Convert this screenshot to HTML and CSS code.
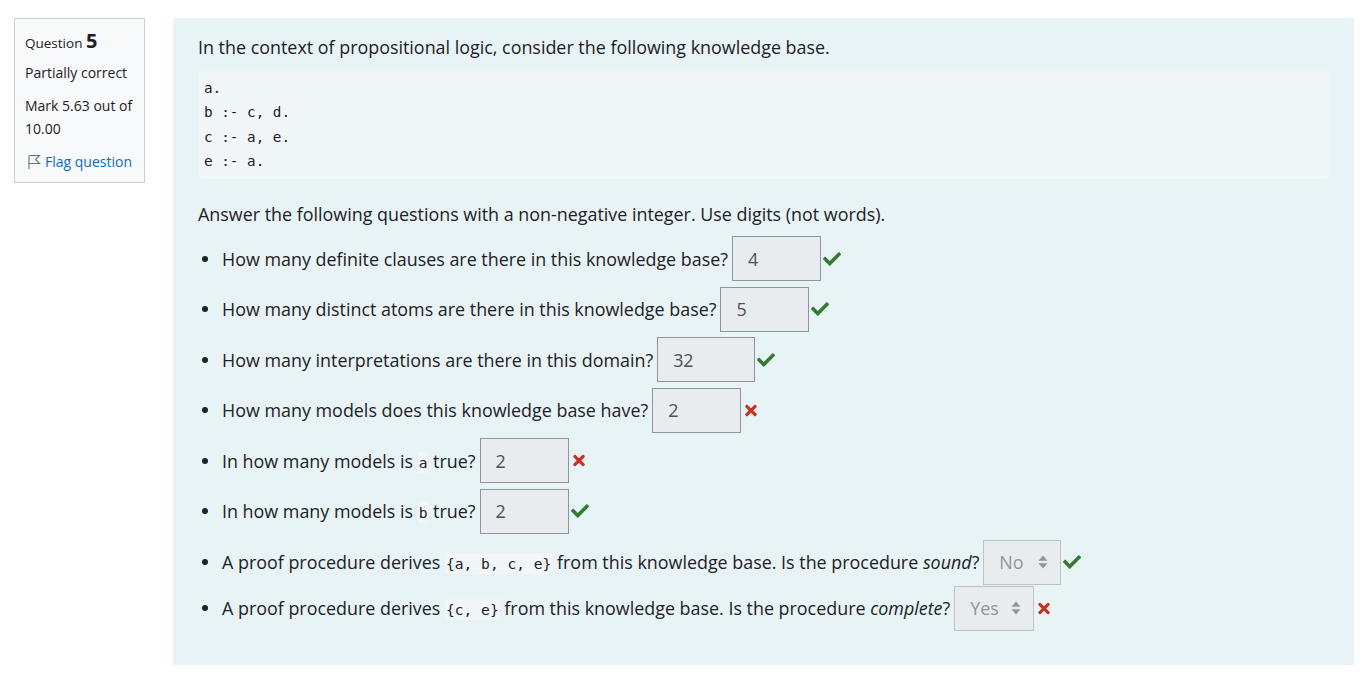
FILE: index.html
```html
<!DOCTYPE html>
<html lang="en">
<head>
<meta charset="utf-8">
<title>Question 5</title>
<link rel="stylesheet" href="styles.css">
</head>
<body>
<div class="que">
  <div class="info">
    <h3 class="qno">Question <span class="num">5</span></h3>
    <div class="state">Partially correct</div>
    <div class="grade">Mark 5.63 out of<br>10.00</div>
    <a class="flag" href="#">
      <svg class="flag-icon" viewBox="0 0 14 16" width="14" height="16"><path d="M2 1.5 V15 M2 1.5 H12.5 L8.5 5.5 L12.5 9.5 H2" fill="none" stroke="#6a737b" stroke-width="1.1" stroke-linejoin="miter"/></svg>
      <span>Flag question</span>
    </a>
  </div>
  <div class="content">
    <p class="lead">In the context of propositional logic, consider the following knowledge base.</p>
<pre class="kb">a.
b :- c, d.
c :- a, e.
e :- a.</pre>
    <p class="prompt">Answer the following questions with a non-negative integer. Use digits (not words).</p>
    <ul class="questions">
      <li class="row">
        <span class="q">How many definite clauses are there in this knowledge base?</span>
        <span class="answer w89">4</span>
        <svg class="ok" viewBox="0 0 512 512" width="18" height="18"><path d="M173.9 439.4l-166.4-166.4c-10-10-10-26.2 0-36.2l36.2-36.2c10-10 26.2-10 36.2 0L192 312.7 432.1 72.6c10-10 26.2-10 36.2 0l36.2 36.2c10 10 10 26.2 0 36.2l-294.4 294.4c-10 10-26.2 10-36.2 0z"/></svg>
      </li>
      <li class="row">
        <span class="q">How many distinct atoms are there in this knowledge base?</span>
        <span class="answer w89">5</span>
        <svg class="ok" viewBox="0 0 512 512" width="18" height="18"><path d="M173.9 439.4l-166.4-166.4c-10-10-10-26.2 0-36.2l36.2-36.2c10-10 26.2-10 36.2 0L192 312.7 432.1 72.6c10-10 26.2-10 36.2 0l36.2 36.2c10 10 10 26.2 0 36.2l-294.4 294.4c-10 10-26.2 10-36.2 0z"/></svg>
      </li>
      <li class="row">
        <span class="q">How many interpretations are there in this domain?</span>
        <span class="answer w98">32</span>
        <svg class="ok" viewBox="0 0 512 512" width="18" height="18"><path d="M173.9 439.4l-166.4-166.4c-10-10-10-26.2 0-36.2l36.2-36.2c10-10 26.2-10 36.2 0L192 312.7 432.1 72.6c10-10 26.2-10 36.2 0l36.2 36.2c10 10 10 26.2 0 36.2l-294.4 294.4c-10 10-26.2 10-36.2 0z"/></svg>
      </li>
      <li class="row">
        <span class="q">How many models does this knowledge base have?</span>
        <span class="answer w89">2</span>
        <svg class="bad" viewBox="0 0 352 512" width="12" height="17"><path d="M242.7 256l100.1-100.1c12.3-12.3 12.3-32.2 0-44.5l-22.2-22.2c-12.3-12.3-32.2-12.3-44.5 0L176 189.3 75.9 89.2c-12.3-12.3-32.2-12.3-44.5 0L9.2 111.5c-12.3 12.3-12.3 32.2 0 44.5L109.3 256 9.2 356.1c-12.3 12.3-12.3 32.2 0 44.5l22.2 22.2c12.3 12.3 32.2 12.3 44.5 0L176 322.7l100.1 100.1c12.3 12.3 32.2 12.3 44.5 0l22.2-22.2c12.3-12.3 12.3-32.2 0-44.5L242.7 256z"/></svg>
      </li>
      <li class="row">
        <span class="q">In how many models is <code>a</code> true?</span>
        <span class="answer w89">2</span>
        <svg class="bad" viewBox="0 0 352 512" width="12" height="17"><path d="M242.7 256l100.1-100.1c12.3-12.3 12.3-32.2 0-44.5l-22.2-22.2c-12.3-12.3-32.2-12.3-44.5 0L176 189.3 75.9 89.2c-12.3-12.3-32.2-12.3-44.5 0L9.2 111.5c-12.3 12.3-12.3 32.2 0 44.5L109.3 256 9.2 356.1c-12.3 12.3-12.3 32.2 0 44.5l22.2 22.2c12.3 12.3 32.2 12.3 44.5 0L176 322.7l100.1 100.1c12.3 12.3 32.2 12.3 44.5 0l22.2-22.2c12.3-12.3 12.3-32.2 0-44.5L242.7 256z"/></svg>
      </li>
      <li class="row">
        <span class="q">In how many models is <code>b</code> true?</span>
        <span class="answer w89">2</span>
        <svg class="ok" viewBox="0 0 512 512" width="18" height="18"><path d="M173.9 439.4l-166.4-166.4c-10-10-10-26.2 0-36.2l36.2-36.2c10-10 26.2-10 36.2 0L192 312.7 432.1 72.6c10-10 26.2-10 36.2 0l36.2 36.2c10 10 10 26.2 0 36.2l-294.4 294.4c-10 10-26.2 10-36.2 0z"/></svg>
      </li>
      <li class="row tight">
        <span class="q">A proof procedure derives <code>{a, b, c, e}</code> from this knowledge base. Is the procedure <em>sound</em>?</span>
        <span class="select w78"><span>No</span><svg class="sort" viewBox="0 0 10 14" width="10" height="14"><path d="M5 0.5 L9.5 5.8 H0.5 Z M5 13.5 L9.5 8.2 H0.5 Z"/></svg></span>
        <svg class="ok" viewBox="0 0 512 512" width="18" height="18"><path d="M173.9 439.4l-166.4-166.4c-10-10-10-26.2 0-36.2l36.2-36.2c10-10 26.2-10 36.2 0L192 312.7 432.1 72.6c10-10 26.2-10 36.2 0l36.2 36.2c10 10 10 26.2 0 36.2l-294.4 294.4c-10 10-26.2 10-36.2 0z"/></svg>
      </li>
      <li class="row">
        <span class="q">A proof procedure derives <code>{c, e}</code> from this knowledge base. Is the procedure <em>complete</em>?</span>
        <span class="select w80"><span>Yes</span><svg class="sort" viewBox="0 0 10 14" width="10" height="14"><path d="M5 0.5 L9.5 5.8 H0.5 Z M5 13.5 L9.5 8.2 H0.5 Z"/></svg></span>
        <svg class="bad" viewBox="0 0 352 512" width="12" height="17"><path d="M242.7 256l100.1-100.1c12.3-12.3 12.3-32.2 0-44.5l-22.2-22.2c-12.3-12.3-32.2-12.3-44.5 0L176 189.3 75.9 89.2c-12.3-12.3-32.2-12.3-44.5 0L9.2 111.5c-12.3 12.3-12.3 32.2 0 44.5L109.3 256 9.2 356.1c-12.3 12.3-12.3 32.2 0 44.5l22.2 22.2c12.3 12.3 32.2 12.3 44.5 0L176 322.7l100.1 100.1c12.3 12.3 32.2 12.3 44.5 0l22.2-22.2c12.3-12.3 12.3-32.2 0-44.5L242.7 256z"/></svg>
      </li>
    </ul>
  </div>
</div>
</body>
</html>
```
FILE: styles.css
```css
* { box-sizing: border-box; }
html, body { margin: 0; padding: 0; background: #fff; }
body {
  font-family: "Open Sans", "Noto Sans", "Liberation Sans", sans-serif;
  color: #1d2125;
  font-size: 17.9px;
}
.que {
  display: flex;
  align-items: flex-start;
  gap: 28px;
  padding: 18px 11px 0 14px;
}
.info {
  flex: 0 0 131px;
  height: 165px;
  background: #f8f9fa;
  border: 1px solid #cad0d7;
  padding: 9px 4px 9px 10px;
  font-size: 14px;
}
.qno {
  margin: 0;
  font-weight: 400;
  font-size: 13.5px;
  line-height: 26px;
  height: 26px;
}
.qno .num {
  font-weight: 700;
  font-size: 20px;
}
.state {
  margin-top: 8px;
  line-height: 22px;
}
.grade {
  margin-top: 10px;
  line-height: 23px;
}
.flag {
  margin-top: 11px;
  display: flex;
  align-items: center;
  gap: 4px;
  line-height: 22px;
  color: #0f6cbf;
  text-decoration: none;
  font-size: 14px;
}
.flag-icon { flex: 0 0 auto; margin-left: 2px; margin-top: -1px; }
.content {
  flex: 0 0 1181px;
  height: 647px;
  background: #e7f3f5;
  padding: 17px 25px 0 25px;
}
.lead, .prompt {
  margin: 0;
  line-height: 24px;
}
.kb {
  margin: 11px 0 0 0;
  padding: 5.5px 6px;
  background: #f1f7f9;
  border-radius: 5px;
  font-family: "DejaVu Sans Mono", "Liberation Mono", monospace;
  font-size: 14.3px;
  line-height: 24.5px;
  color: #1d2125;
}
.prompt { margin-top: 23px; }
.questions {
  list-style: none;
  margin: 10px 0 0 0;
  padding: 0;
}
.row {
  display: flex;
  align-items: center;
  height: 45px;
  margin-bottom: 5.6px;
  padding-left: 24px;
  position: relative;
}
.row.tight { margin-bottom: 1px; }
.row::before {
  content: "";
  position: absolute;
  left: 4px;
  top: 50%;
  width: 6px;
  height: 6px;
  margin-top: -3px;
  border-radius: 50%;
  background: #1d2125;
}
.q { white-space: nowrap; }
code {
  font-family: "DejaVu Sans Mono", "Liberation Mono", monospace;
  font-size: 14.6px;
  background: #f1f7f9;
  padding: 2px 1px;
}
em { font-style: italic; }
.answer, .select {
  display: inline-flex;
  align-items: center;
  height: 45px;
  margin-left: 4px;
  background: #e9ecef;
  padding-left: 15px;
}
.answer {
  border: 1px solid #8f959e;
  color: #495057;
}
.select {
  border: 1px solid #bcc2c8;
  color: #8e959c;
  justify-content: space-between;
  padding-right: 12px;
}
.sort { fill: #8e959c; }
.w89 { width: 89px; }
.w98 { width: 98px; }
.w78 { width: 78px; }
.w80 { width: 80px; }
.ok { fill: #357a32; margin-left: 2px; }
.bad { fill: #ca3120; margin-left: 4px; }
```
